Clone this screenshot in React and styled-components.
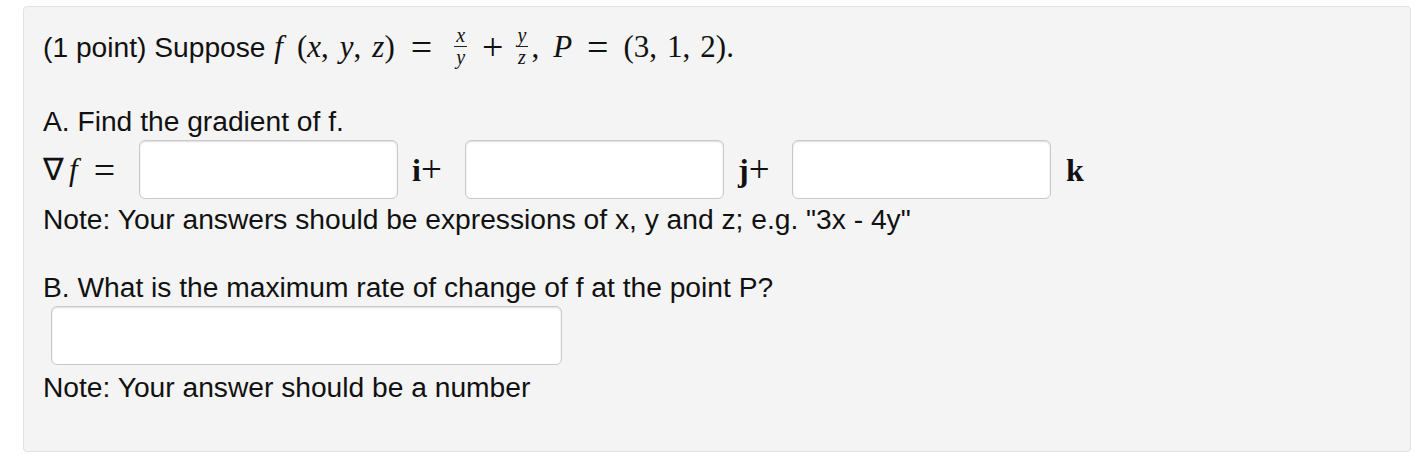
import React from "react";
import styled, { createGlobalStyle } from "styled-components";

const Global = createGlobalStyle`
  html, body { margin: 0; padding: 0; background: #ffffff; }
  body { font-family: "Liberation Sans", Arial, sans-serif; color: #111; }
`;

const Page = styled.div`
  padding: 6px 7px 3px 23px;
`;

const Panel = styled.div`
  box-sizing: border-box;
  width: 1388px;
  height: 446px;
  background: #f4f4f4;
  border: 1px solid #e2e2e2;
  border-radius: 4px;
  padding: 10px 19px 0 19px;
  font-size: 28.2px;
  line-height: 36px;
`;

const Line = styled.div`
  display: flex;
  align-items: center;
  min-height: ${(p) => p.$h || 36}px;
  margin-top: ${(p) => p.$mt || 0}px;
  white-space: pre;
`;

const Math = styled.span`
  font-family: "Liberation Serif", "Times New Roman", serif;
  font-size: 31px;
  display: inline-flex;
  align-items: center;
  white-space: pre;
  width: ${(p) => (p.$w ? `${p.$w}px` : "auto")};
`;

const Var = styled.i`
  font-style: italic;
  margin-right: ${(p) => p.$mr || 0}px;
  margin-left: ${(p) => p.$ml || 0}px;
`;

const Sep = styled.span`
  margin-right: ${(p) => p.$mr ?? 11}px;
`;

const Op = styled.span`
  font-size: 38px;
  line-height: 36px;
  margin-left: ${(p) => p.$l}px;
  margin-right: ${(p) => p.$r}px;
`;

const Frac = styled.span`
  display: inline-flex;
  flex-direction: column;
  align-items: center;
  font-size: 20px;
  line-height: 17px;
  margin: 0 3px;
  transform: translateY(-1px);
`;

const Num = styled.span`
  font-style: italic;
  padding: 0 2px 2px;
  border-bottom: 1px solid #222;
`;

const Den = styled.span`
  font-style: italic;
  padding-top: 2px;
`;

const Row = styled.div`
  display: flex;
  align-items: center;
  height: 61px;
`;

const Input = styled.input`
  box-sizing: border-box;
  width: ${(p) => p.$w}px;
  height: 59px;
  margin-left: ${(p) => p.$ml || 0}px;
  margin-right: ${(p) => p.$mr || 0}px;
  border: 1px solid #c9c9c9;
  border-radius: 6px;
  background: #ffffff;
  box-shadow: inset 0 1px 2px rgba(0, 0, 0, 0.14);
  outline: none;
  font-size: 20px;
`;

const Unit = styled.span`
  display: inline-flex;
  align-items: center;
  font-family: "Liberation Serif", "Times New Roman", serif;
  font-size: 32px;
  width: ${(p) => p.$w}px;
  white-space: pre;
`;

const Bold = styled.b`
  font-weight: 700;
`;

const Plus = styled.span`
  font-size: 37px;
`;

export default function App() {
  return (
    <Page>
      <Global />
      <Panel>
        <Line $h={60}>
          {"(1 point) Suppose "}
          <Math>
            <Var $ml={1} $mr={14}>f</Var>
            {"("}
            <Var>x</Var>
            <Sep>{","}</Sep>
            <Var>y</Var>
            <Sep>{","}</Sep>
            <Var>z</Var>
            {")"}
            <Op $l={16} $r={19}>=</Op>
            <Frac>
              <Num>x</Num>
              <Den>y</Den>
            </Frac>
            <Op $l={12} $r={9}>+</Op>
            <Frac>
              <Num>y</Num>
              <Den>z</Den>
            </Frac>
            <Sep $mr={14}>{","}</Sep>
            <Var>P</Var>
            <Op $l={15} $r={15}>=</Op>
            {"(3,"}
            <Sep $mr={10} />
            {"1,"}
            <Sep $mr={10} />
            {"2)."}
          </Math>
        </Line>
        <Line $mt={26}>A. Find the gradient of f.</Line>
        <Row>
          <Math $w={96}>
            {"∇"}
            <Var $ml={5}>f</Var>
            <Op $l={16} $r={0}>=</Op>
          </Math>
          <Input $w={259} $mr={14} />
          <Unit $w={53}>
            <Bold>i</Bold>
            <Plus>+</Plus>
          </Unit>
          <Input $w={259} $mr={14} />
          <Unit $w={54}>
            <Bold>j</Bold>
            <Plus>+</Plus>
          </Unit>
          <Input $w={259} $mr={15} />
          <Unit $w={30}>
            <Bold>k</Bold>
          </Unit>
        </Row>
        <Line $mt={1}>Note: Your answers should be expressions of x, y and z; e.g. "3x - 4y"</Line>
        <Line $mt={32}>B. What is the maximum rate of change of f at the point P?</Line>
        <Row>
          <Input $w={511} $ml={8} />
        </Row>
        <Line $mt={3}>Note: Your answer should be a number</Line>
      </Panel>
    </Page>
  );
}
